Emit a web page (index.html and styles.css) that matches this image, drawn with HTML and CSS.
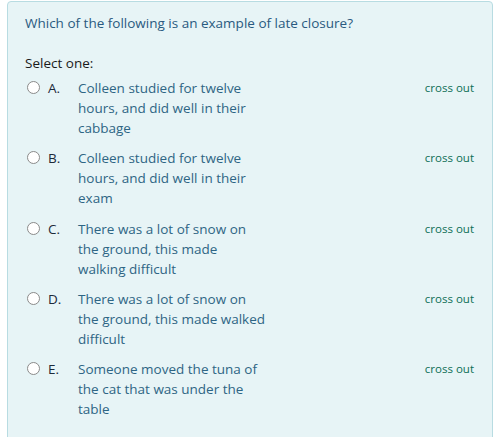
FILE: index.html
```html
<!DOCTYPE html>
<html>
<head>
<meta charset="utf-8">
<link rel="stylesheet" href="styles.css">
</head>
<body>
<div class="formulation">
  <div class="qtext">Which of the following is an example of late closure?</div>
  <div class="prompt">Select one:</div>
  <div class="answers">
    <div class="opt">
      <span class="radio"></span>
      <span class="letter">A.</span>
      <span class="text">Colleen studied for twelve hours, and did well in their cabbage</span>
      <span class="cross">cross out</span>
    </div>
    <div class="opt">
      <span class="radio"></span>
      <span class="letter">B.</span>
      <span class="text">Colleen studied for twelve hours, and did well in their exam</span>
      <span class="cross">cross out</span>
    </div>
    <div class="opt">
      <span class="radio"></span>
      <span class="letter">C.</span>
      <span class="text">There was a lot of snow on the ground, this made walking difficult</span>
      <span class="cross">cross out</span>
    </div>
    <div class="opt">
      <span class="radio"></span>
      <span class="letter">D.</span>
      <span class="text">There was a lot of snow on the ground, this made walked difficult</span>
      <span class="cross">cross out</span>
    </div>
    <div class="opt">
      <span class="radio"></span>
      <span class="letter">E.</span>
      <span class="text">Someone moved the tuna of the cat that was under the table</span>
      <span class="cross">cross out</span>
    </div>
  </div>
</div>
</body>
</html>
```
FILE: styles.css
```css
html, body {
  margin: 0;
  padding: 0;
  background: #ffffff;
  font-family: "Open Sans", "Noto Sans", sans-serif;
}
.formulation {
  margin: 1px 0 0 7px;
  width: 486px;
  height: 460px;
  box-sizing: border-box;
  background: #e7f4f6;
  border: 1px solid #b8dce2;
  border-radius: 4px;
  padding: 11px 18px 0 17px;
}
.qtext {
  font-size: 13.5px;
  line-height: 20px;
  color: #2a5a80;
}
.prompt {
  margin-top: 20px;
  font-size: 13.5px;
  line-height: 20px;
  color: #1a1a1a;
}
.answers {
  display: flex;
  flex-direction: column;
  gap: 10.3px;
  margin-top: 5px;
}
.opt {
  display: flex;
  align-items: flex-start;
  font-size: 13.5px;
  line-height: 20px;
}
.radio {
  flex: none;
  width: 11px;
  height: 11px;
  margin: 3px 0 0 2px;
  border: 1px solid #8a8a8a;
  border-radius: 50%;
  background: #ffffff;
}
.letter {
  flex: none;
  width: 30px;
  margin-left: 8px;
  color: #1c2a3a;
}
.text {
  width: 188px;
  color: #2e6584;
}
.cross {
  margin-left: auto;
  font-size: 11.5px;
  color: #0c6e55;
  line-height: 20px;
}
```
